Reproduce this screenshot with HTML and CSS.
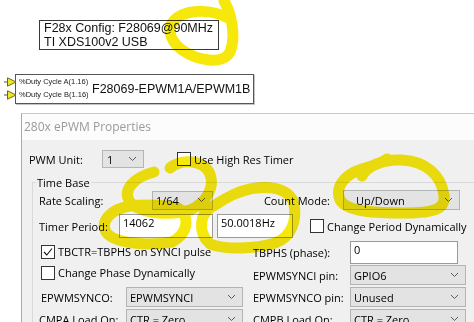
FILE: index.html
```html
<!DOCTYPE html>
<html>
<head>
<meta charset="utf-8">
<title>280x ePWM Properties</title>
<link rel="stylesheet" href="styles.css">
</head>
<body>
<div class="canvas">
  <div class="block config">
    <div>F28x Config: F28069@90MHz</div>
    <div>TI XDS100v2 USB</div>
  </div>
  <div class="block epwm">
    <div class="ports">
      <div class="port">
        <svg class="port-arrow" width="13" height="10" viewBox="0 0 13 10"><line x1="0" y1="5" x2="4" y2="5" stroke="#555" stroke-width="1"/><polygon points="3.5,0.8 12,5 3.5,9.2" fill="#efe81c" stroke="#6f6a10" stroke-width="1"/></svg>
        <span>%Duty Cycle A(1.16)</span>
      </div>
      <div class="port">
        <svg class="port-arrow" width="13" height="10" viewBox="0 0 13 10"><line x1="0" y1="5" x2="4" y2="5" stroke="#555" stroke-width="1"/><polygon points="3.5,0.8 12,5 3.5,9.2" fill="#efe81c" stroke="#6f6a10" stroke-width="1"/></svg>
        <span>%Duty Cycle B(1.16)</span>
      </div>
    </div>
    <div class="epwm-name">F28069-EPWM1A/EPWM1B</div>
  </div>
</div>

<div class="dialog">
  <div class="titlebar">280x ePWM Properties</div>
  <div class="dlg-body">
    <div class="row row-unit">
      <span class="lbl lbl-unit">PWM Unit:</span>
      <div class="combo combo-unit"><span>1</span><svg class="chev" width="7" height="4" viewBox="0 0 7 4"><polyline points="0,0 3.5,3.5 7,0"/></svg></div>
      <div class="check check-hires"><span class="box"></span><span>Use High Res Timer</span></div>
    </div>

    <fieldset class="group">
      <legend>Time Base</legend>
      <div class="row row-rate">
        <span class="lbl lbl-rate">Rate Scaling:</span>
        <div class="combo combo-rate"><span>1/64</span><svg class="chev" width="7" height="4" viewBox="0 0 7 4"><polyline points="0,0 3.5,3.5 7,0"/></svg></div>
        <span class="lbl lbl-count">Count Mode:</span>
        <div class="combo combo-count"><span>Up/Down</span><svg class="chev" width="7" height="4" viewBox="0 0 7 4"><polyline points="0,0 3.5,3.5 7,0"/></svg></div>
      </div>
      <div class="row row-period">
        <span class="lbl lbl-period">Timer Period:</span>
        <div class="edit edit-period">14062</div>
        <div class="edit edit-freq">50.0018Hz</div>
        <div class="check check-period"><span class="box"></span><span>Change Period Dynamically</span></div>
      </div>
      <div class="grid">
        <div class="check check-sync"><span class="box"><svg width="12" height="12" viewBox="0 0 12 12"><polyline points="2,6 4.8,9 10,2.5"/></svg></span><span>TBCTR=TBPHS on SYNCI pulse</span></div>
        <span class="lbl cell-lbl tall">TBPHS (phase):</span>
        <div class="edit edit-phase">0</div>

        <div class="check check-phase"><span class="box"></span><span>Change Phase Dynamically</span></div>
        <span class="lbl cell-lbl">EPWMSYNCI pin:</span>
        <div class="combo combo-r"><span>GPIO6</span><svg class="chev" width="7" height="4" viewBox="0 0 7 4"><polyline points="0,0 3.5,3.5 7,0"/></svg></div>

        <span class="lbl cell-lbl lbl-left">EPWMSYNCO:</span>
        <div class="combo combo-l"><span>EPWMSYNCI</span><svg class="chev" width="7" height="4" viewBox="0 0 7 4"><polyline points="0,0 3.5,3.5 7,0"/></svg></div>
        <span class="lbl cell-lbl">EPWMSYNCO pin:</span>
        <div class="combo combo-r"><span>Unused</span><svg class="chev" width="7" height="4" viewBox="0 0 7 4"><polyline points="0,0 3.5,3.5 7,0"/></svg></div>

        <span class="lbl cell-lbl">CMPA Load On:</span>
        <div class="combo combo-l"><span>CTR = Zero</span><svg class="chev" width="7" height="4" viewBox="0 0 7 4"><polyline points="0,0 3.5,3.5 7,0"/></svg></div>
        <span class="lbl cell-lbl">CMPB Load On:</span>
        <div class="combo combo-r"><span>CTR = Zero</span><svg class="chev" width="7" height="4" viewBox="0 0 7 4"><polyline points="0,0 3.5,3.5 7,0"/></svg></div>
      </div>
    </fieldset>
  </div>
</div>

<svg class="marker" width="474" height="322" viewBox="0 0 474 322">
  <g fill="none" stroke="#f7e80c" stroke-width="11" stroke-linecap="round" stroke-linejoin="round">
    <path d="M 224,1 C 232,14 236,38 230,52 C 223,65 198,61 182,50 C 169,40 165,26 178,17 C 192,9 212,10 226,17"/>
    <path d="M 170,168 C 182,158 204,160 210,174 C 215,188 206,203 190,210 C 170,216 140,214 130,202 C 122,190 134,177 154,172"/>
    <path d="M 176,207 C 190,214 190,232 172,242 C 150,246 114,244 106,232 C 100,220 112,209 130,206 C 145,204 160,205 176,207"/>
    <path d="M 215,205 C 199,212 197,232 210,244 C 225,250 255,249 275,243 C 292,237 297,220 294,204 C 291,191 276,186 256,188 C 239,190 226,198 215,205"/>
    <path d="M 362,176 C 367,166 383,159 401,160 C 426,161 441,175 444,195 C 446,209 434,213 405,213 C 375,213 347,212 340,200 C 335,188 343,175 362,169 C 372,166 380,164 387,159"/>
  </g>
</svg>
</body>
</html>
```

FILE: styles.css
```css
* { box-sizing: border-box; }

html, body {
  margin: 0;
  padding: 0;
}

body {
  position: relative;
  width: 474px;
  height: 322px;
  overflow: hidden;
  background: #ffffff;
  font-family: "Liberation Sans", Arial, sans-serif;
  color: #111;
}

/* ---------- diagram canvas ---------- */
.canvas {
  padding-top: 20px;
}

.block {
  background: #fff;
}

.config {
  margin-left: 39px;
  width: 180px;
  border: 1px solid #3a3a3a;
  padding: 0 0 0 4px;
  font-size: 12.5px;
  line-height: 14px;
}

.epwm {
  margin: 24px 0 0 15px;
  width: 239px;
  height: 30px;
  border: 1px solid #555;
  box-shadow: 1px 1px 0 #c4c4c4;
  display: flex;
  align-items: center;
}

.ports {
  width: 76px;
  align-self: flex-start;
  display: flex;
  flex-direction: column;
}

.port {
  display: flex;
  align-items: center;
  height: 13px;
  font-size: 7.5px;
  line-height: 13px;
  white-space: nowrap;
  color: #222;
}

.port-arrow {
  flex: none;
  margin-left: -12px;
  margin-right: 2px;
}

.epwm-name {
  font-size: 12.5px;
  line-height: 15px;
  white-space: nowrap;
}

/* ---------- dialog ---------- */
.dialog {
  margin: 9px 0 0 21px;
  width: 470px;
  border-left: 1px solid #a9a9a9;
  border-top: 1px solid #c9c9c9;
  font-family: "Open Sans", "Noto Sans", sans-serif;
  font-size: 11px;
  color: #000;
}

.titlebar {
  height: 26px;
  padding: 5px 0 0 2px;
  line-height: 16px;
  font-size: 12px;
  color: #9a9a9a;
  background: #fcfcfc;
}

.dlg-body {
  background: #f0f0f0;
  padding: 10px 0 0 7px;
  height: 260px;
}

.row {
  display: flex;
  align-items: center;
}

.lbl {
  line-height: 15px;
  white-space: nowrap;
}

.row-unit { height: 18px; }
.lbl-unit { width: 73px; }

/* combo box */
.combo {
  display: flex;
  align-items: center;
  justify-content: space-between;
  height: 20px;
  padding: 0 7px 0 3px;
  background: #e3e3e3;
  border: 1px solid #b4b4b4;
  line-height: 15px;
  white-space: nowrap;
}

.chev {
  flex: none;
}

.chev polyline {
  fill: none;
  stroke: #5a5a5a;
  stroke-width: 1;
}

.combo-unit {
  width: 42px;
  height: 18px;
  padding-left: 4px;
}

/* edit box */
.edit {
  background: #fff;
  border: 1px solid #9a9a9a;
  padding: 0 0 0 3px;
  line-height: 15px;
  white-space: nowrap;
}

/* checkbox */
.check {
  display: flex;
  align-items: center;
  line-height: 15px;
  white-space: nowrap;
}

.box {
  flex: none;
  width: 14px;
  height: 14px;
  margin-right: 3px;
  border: 1px solid #333;
  background: #fff;
  display: flex;
  align-items: center;
  justify-content: center;
}

.box svg polyline {
  fill: none;
  stroke: #111;
  stroke-width: 1.1;
}

.check-hires { margin-left: 33px; }

/* group box */
.group {
  margin: 7px 0 0 3px;
  padding: 0 0 0 6px;
  width: 470px;
  min-width: 0;
  border: 1px solid #d9d9d9;
}

.group legend {
  margin-left: -3px;
  padding: 0 1px;
  line-height: 15px;
}

.row-rate { height: 20px; }
.lbl-rate { width: 113px; }
.combo-rate { width: 61px; height: 19px; }
.lbl-count { width: 117px; text-align: right; }
.combo-count { margin-left: 13px; width: 117px; padding-left: 12px; }

.row-period { height: 24px; margin-top: 4px; }
.lbl-period { width: 80px; }
.edit-period { width: 94px; height: 24px; }
.edit-freq { margin-left: 4px; width: 76px; height: 24px; }
.check-period { margin-left: 17px; }

.grid {
  margin-top: 3px;
  display: grid;
  grid-template-columns: 87px 127px 97px 116px;
  grid-template-rows: 24px 22px 22px 22px;
  align-items: start;
}

.grid .check {
  grid-column: 1 / span 2;
  margin-left: 2px;
}

.check-sync { margin-top: 3px; }
.check-phase { margin-top: 0; }

.cell-lbl {
  height: 20px;
  display: flex;
  align-items: center;
}

.cell-lbl.tall { height: 23px; }

.lbl-left { padding-left: 2px; }

.edit-phase { width: 108px; height: 23px; }

.combo-l { width: 117px; }
.combo-r { width: 116px; }

/* hand-drawn highlighter marks */
.marker {
  position: absolute;
  left: 0;
  top: 0;
  pointer-events: none;
  mix-blend-mode: multiply;
}
```
